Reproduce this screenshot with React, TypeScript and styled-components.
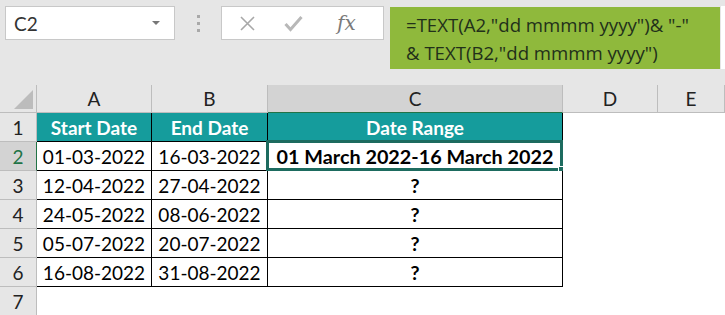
import { Fragment } from 'react';
import styled, { createGlobalStyle } from 'styled-components';

const GlobalStyle = createGlobalStyle`
  html, body {
    margin: 0;
    padding: 0;
    background: #e6e6e6;
  }
  body {
    font-family: Lato, "Open Sans", sans-serif;
  }
`;

const Page = styled.div`
  width: 725px;
  height: 315px;
  overflow: hidden;
  background: #e6e6e6;
`;

const TopBar = styled.div`
  position: relative;
  height: 85px;
  display: flex;
  align-items: flex-start;
  padding: 6px 0 0 5px;
  box-sizing: border-box;
`;

const NameBox = styled.div`
  width: 170px;
  height: 34px;
  box-sizing: border-box;
  background: #fff;
  border: 1px solid #c8c8c8;
  display: flex;
  align-items: center;
  justify-content: space-between;
  padding: 0 14px 0 8px;
  font-size: 19px;
  color: #333;
`;

const Caret = styled.span`
  width: 0;
  height: 0;
  border-left: 4px solid transparent;
  border-right: 4px solid transparent;
  border-top: 4px solid #777;
`;

const Dots = styled.div`
  width: 46px;
  display: flex;
  flex-direction: column;
  align-items: center;
  gap: 4px;
  padding-top: 9px;
  span {
    width: 3px;
    height: 3px;
    background: #a9a9a9;
  }
`;

const FormulaBox = styled.div`
  width: 163px;
  height: 34px;
  box-sizing: border-box;
  background: #fff;
  border: 1px solid #c8c8c8;
  display: flex;
  align-items: center;
  padding-left: 17px;
  gap: 28px;
`;

const Fx = styled.span`
  font-family: "DejaVu Serif", "Liberation Serif", serif;
  font-style: italic;
  font-size: 20px;
  color: #7a7a7a;
  margin-left: 6px;
`;

const Callout = styled.div`
  position: absolute;
  left: 390px;
  top: 7px;
  width: 330px;
  height: 62px;
  box-sizing: border-box;
  background: #8fb93c;
  color: #22301a;
  font-family: "Open Sans", sans-serif;
  font-size: 18.6px;
  line-height: 28px;
  padding: 4px 0 0 16px;
  white-space: nowrap;
`;

const RightStrip = styled.div`
  position: absolute;
  left: 721px;
  top: 6px;
  width: 4px;
  height: 63px;
  background: #fff;
`;

const Grid = styled.div`
  display: grid;
  grid-template-columns: 37px 115px 116px 295px 95px 1fr;
  grid-template-rows: 28px repeat(7, 29px);
  background: #fff;
`;

const Corner = styled.div`
  background: #e6e6e6;
  border-right: 1px solid #bdbdbd;
  border-bottom: 1px solid #bdbdbd;
  position: relative;
  &::after {
    content: '';
    position: absolute;
    right: 3px;
    bottom: 3px;
    width: 0;
    height: 0;
    border-left: 19px solid transparent;
    border-bottom: 19px solid #bcbcbc;
  }
`;

const ColHead = styled.div<{ $active?: boolean }>`
  background: ${p => (p.$active ? '#d3d3d3' : '#e6e6e6')};
  border-right: 1px solid #bdbdbd;
  border-bottom: 1px solid ${p => (p.$active ? '#217346' : '#bdbdbd')};
  display: flex;
  align-items: center;
  justify-content: center;
  font-size: 19px;
  color: #222;
`;

const RowHead = styled.div<{ $active?: boolean }>`
  background: ${p => (p.$active ? '#d3d3d3' : '#e6e6e6')};
  border-right: 1px solid ${p => (p.$active ? '#217346' : '#bdbdbd')};
  border-bottom: 1px solid #bdbdbd;
  display: flex;
  align-items: center;
  justify-content: center;
  font-size: 19px;
  color: ${p => (p.$active ? '#217346' : '#222')};
`;

const Cell = styled.div<{ $head?: boolean; $bold?: boolean; $table?: boolean }>`
  position: relative;
  box-sizing: border-box;
  background: ${p => (p.$head ? '#159c9c' : '#fff')};
  color: ${p => (p.$head ? '#fff' : '#000')};
  font-weight: ${p => (p.$head || p.$bold ? 700 : 400)};
  font-size: ${p => (p.$bold ? '19.8px' : '19px')};
  display: flex;
  align-items: center;
  justify-content: center;
  ${p => p.$table && 'border-right: 1px solid #000; border-bottom: 1px solid #000;'}
`;

const Selection = styled.div`
  position: absolute;
  inset: -2px -1px -1px -2px;
  border: 3px solid #1d6b5f;
  pointer-events: none;
  &::after {
    content: '';
    position: absolute;
    right: -5px;
    bottom: -5px;
    width: 5px;
    height: 5px;
    background: #1d6b5f;
    border: 1px solid #fff;
  }
`;

const XIcon = () => (
  <svg width="17" height="17" viewBox="0 0 17 17">
    <path d="M2 2 L15 15 M15 2 L2 15" stroke="#a8a8a8" strokeWidth="1.6" fill="none" />
  </svg>
);

const CheckIcon = () => (
  <svg width="19" height="17" viewBox="0 0 19 17">
    <path d="M1.5 9 L6.5 14.5 L17.5 2" stroke="#b8b8b8" strokeWidth="3" fill="none" />
  </svg>
);

const rows = [
  ['01-03-2022', '16-03-2022', '01 March 2022-16 March 2022'],
  ['12-04-2022', '27-04-2022', '?'],
  ['24-05-2022', '08-06-2022', '?'],
  ['05-07-2022', '20-07-2022', '?'],
  ['16-08-2022', '31-08-2022', '?'],
];

export default function App() {
  return (
    <Page>
      <GlobalStyle />
      <TopBar>
        <NameBox>
          C2
          <Caret />
        </NameBox>
        <Dots>
          <span />
          <span />
          <span />
        </Dots>
        <FormulaBox>
          <XIcon />
          <CheckIcon />
          <Fx>fx</Fx>
        </FormulaBox>
        <Callout>
          =TEXT(A2,"dd mmmm yyyy")&amp; "-"
          <br />
          &amp; TEXT(B2,"dd mmmm yyyy")
        </Callout>
        <RightStrip />
      </TopBar>
      <Grid>
        <Corner />
        {['A', 'B', 'C', 'D', 'E'].map(c => (
          <ColHead key={c} $active={c === 'C'}>
            {c}
          </ColHead>
        ))}

        <RowHead>1</RowHead>
        <Cell $head $table>Start Date</Cell>
        <Cell $head $table>End Date</Cell>
        <Cell $head $table>Date Range</Cell>
        <Cell />
        <Cell />

        {rows.map((r, i) => (
          <Fragment key={i}>
            <RowHead $active={i === 0}>{i + 2}</RowHead>
            <Cell $table>{r[0]}</Cell>
            <Cell $table>{r[1]}</Cell>
            <Cell $table $bold>
              {r[2]}
              {i === 0 && <Selection />}
            </Cell>
            <Cell />
            <Cell />
          </Fragment>
        ))}

        <RowHead>7</RowHead>
        <Cell />
        <Cell />
        <Cell />
        <Cell />
        <Cell />
      </Grid>
    </Page>
  );
}
